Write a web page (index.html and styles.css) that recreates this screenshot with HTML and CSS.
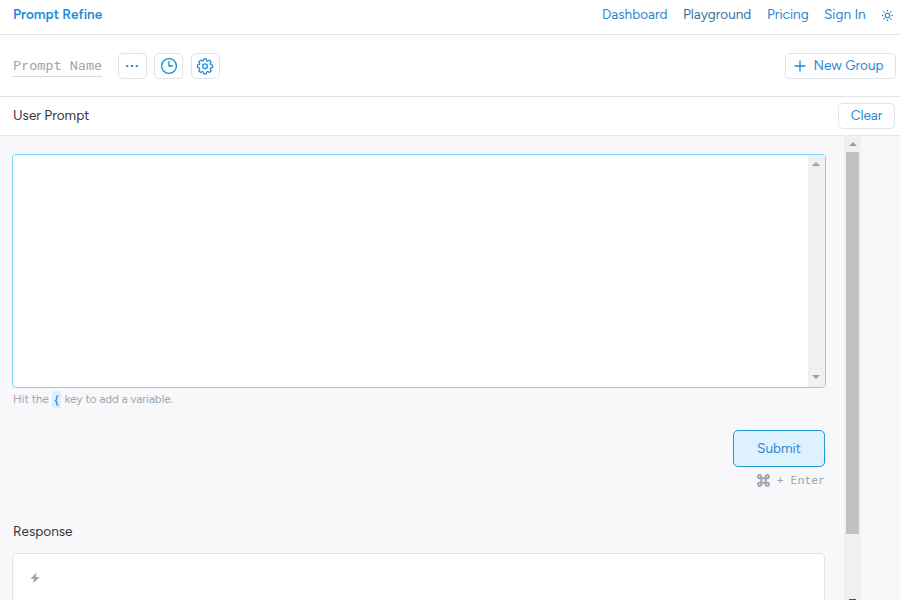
FILE: index.html
```html
<!DOCTYPE html>
<html lang="en">
<head>
    <meta charset="UTF-8">
    <meta name="viewport" content="width=device-width, initial-scale=1.0">
    <title>Prompt Refine</title>
    <link rel="stylesheet" href="styles.css">
</head>

<body>
<!-- Navigation -->
<header class="navbar">
    <a class="brand" href="#"><span>Prompt Refine</span></a>
    <nav class="nav-links">
        <a class="w-dashboard" href="#">Dashboard</a>
        <a class="w-playground active" href="#">Playground</a>
        <a class="w-pricing" href="#">Pricing</a>
        <a class="w-signin" href="#">Sign In</a>
        <svg class="sun" viewBox="0 0 24 24"><circle cx="12" cy="12" r="4.2"/><path d="M12 1.5v3M12 19.5v3M1.5 12h3M19.5 12h3M4.6 4.6l2.1 2.1M17.3 17.3l2.1 2.1M4.6 19.4l2.1-2.1M17.3 6.7l2.1-2.1"/></svg>
    </nav>
</header>

<!-- Prompt toolbar -->
<div class="toolbar">
    <div class="prompt-name">Prompt Name</div>
    <button class="btn icon-btn">
        <svg viewBox="0 0 18 18"><path class="dots" d="M3.2 8.1h2v2h-2zM8 8.1h2v2H8zM12.8 8.1h2v2h-2z"/></svg>
    </button>
    <button class="btn icon-btn">
        <svg viewBox="0 0 18 18"><circle cx="9" cy="9" r="7.4"/><path d="M9 4v5h4"/></svg>
    </button>
    <button class="btn icon-btn">
        <svg viewBox="0 0 24 24" class="gear"><path d="M10.3 2.4h3.4l.5 2.4 1.6.7 2.1-1.4 2.4 2.4-1.4 2.1.7 1.6 2.4.5v3.4l-2.4.5-.7 1.6 1.4 2.1-2.4 2.4-2.1-1.4-1.6.7-.5 2.4h-3.4l-.5-2.4-1.6-.7-2.1 1.4-2.4-2.4 1.4-2.1-.7-1.6-2.4-.5v-3.4l2.4-.5.7-1.6-1.4-2.1 2.4-2.4 2.1 1.4 1.6-.7z"/><circle cx="12" cy="12.4" r="3.2"/></svg>
    </button>
    <button class="btn new-group">
        <svg viewBox="0 0 12 12"><path d="M6 .5v11M.5 6h11"/></svg>
        <span>New Group</span>
    </button>
</div>

<div class="section-bar">
    <h2>User Prompt</h2>
    <button class="btn clear">Clear</button>
</div>

<main class="workspace">
    <div class="panel">
        <div class="editor">
            <div class="editor-text" contenteditable="true"></div>
            <div class="scrollbar editor-scroll">
                <span class="arrow up"></span>
                <span class="arrow down"></span>
            </div>
        </div>
        <div class="hint"><span>Hit the</span><code>{</code><span>key to add a variable.</span></div>

        <div class="submit-area">
            <button class="submit">Submit</button>
            <div class="shortcut">
                <svg viewBox="0 0 12 12"><path d="M4 4V2.6A1.5 1.5 0 1 0 2.6 4h6.8A1.5 1.5 0 1 0 8 2.6v6.8A1.5 1.5 0 1 0 9.4 8H2.6A1.5 1.5 0 1 0 4 9.4z"/></svg>
                <span>+ Enter</span>
            </div>
        </div>

        <h2 class="response-title">Response</h2>
        <div class="response">
            <svg viewBox="0 0 10 12"><path d="M6.6.5.4 6.8h3.7L3.2 11.5 9.6 5H5.8z"/></svg>
        </div>
    </div>
    <div class="scrollbar page-scroll">
        <span class="arrow up"></span>
        <div class="thumb"></div>
        <span class="arrow-end"></span>
    </div>
</main>

</body>
</html>
```

FILE: styles.css
```css
* {
    box-sizing: border-box;
}
body {
    margin: 0;
    height: 100vh;
    overflow: hidden;
    display: flex;
    flex-direction: column;
    font-family: Figtree, Inter, "Liberation Sans", sans-serif;
    font-size: 13.6px;
    line-height: 18px;
    color: #333338;
    background-color: #fff;
}
button {
    font: inherit;
    padding: 0;
}
a {
    color: #2f87cf;
    text-decoration: none;
}
h2 {
    margin: 0;
    font-size: 13.6px;
    font-weight: 400;
}
svg {
    display: block;
    flex: none;
    fill: none;
    stroke: #168bd2;
}
.navbar {
    height: 35px;
    flex: none;
    display: flex;
    justify-content: space-between;
    padding: 5px 6px 0 13px;
    border-bottom: 1px solid #e2e2ea;
}
.brand {
    font-weight: 600;
    color: #208ad6;
}
.nav-links {
    display: flex;
    gap: 16px;
}
.nav-links a {
    white-space: nowrap;
}
.nav-links .active {
    color: #3d72a4;
}
.w-dashboard {
    width: 65px;
}
.w-playground {
    width: 68px;
}
.w-pricing {
    width: 41px;
}
.w-signin {
    width: 42px;
}
.sun {
    width: 13px;
    height: 13px;
    margin: 4px 0 0 -1px;
    stroke-width: 2;
}
.toolbar {
    height: 62px;
    flex: none;
    display: flex;
    align-items: center;
    gap: 7.6px;
    padding: 0 4px 0 13px;
    border-bottom: 1px solid #e2e2ea;
}
.prompt-name {
    width: 89px;
    height: 20px;
    margin: 3px 8px 0 0;
    font-family: "Roboto Mono", "Liberation Mono", monospace;
    font-size: 13.5px;
    line-height: 17px;
    color: #a5a5aa;
    white-space: nowrap;
    border-bottom: 1px solid #d9d9e1;
}
.btn {
    display: flex;
    align-items: center;
    justify-content: center;
    color: #2f87cf;
    background-color: #fff;
    border: 1px solid #e2e2ea;
    border-radius: 5px;
}
.icon-btn {
    width: 29px;
    height: 26px;
}
.icon-btn svg {
    width: 18px;
    height: 18px;
    stroke-width: 1.3;
}
.icon-btn .gear {
    stroke-width: 1.6;
    stroke-linejoin: round;
}
.icon-btn .dots {
    fill: #168bd2;
    stroke: none;
}
.new-group {
    width: 111px;
    height: 26px;
    margin-left: auto;
    padding-right: 3px;
    gap: 7px;
}
.new-group svg {
    width: 12px;
    height: 12px;
    stroke-width: 1.3;
}
.new-group span {
    padding-bottom: 2px;
}
.section-bar {
    height: 38px;
    flex: none;
    display: flex;
    align-items: center;
    justify-content: space-between;
    padding: 0 5px 0 13px;
}
.section-bar h2 {
    padding-bottom: 2px;
}
.clear {
    width: 57px;
    height: 26px;
    padding-bottom: 2px;
}
.workspace {
    flex: 1;
    min-height: 0;
    display: flex;
    background-color: #f8f8fb;
    border-top: 1px solid #e7e7ec;
}
.panel {
    width: 844px;
    padding: 18px 18px 0 12px;
}
.editor {
    height: 234px;
    display: flex;
    background-color: #fff;
    border: 1px solid #7ccfff;
    border-radius: 4px;
    overflow: hidden;
}
.editor-text {
    flex: 1;
    outline: none;
    box-shadow: inset 0 2px 2px #f7f7f8;
}
.scrollbar {
    display: flex;
    flex-direction: column;
    align-items: center;
    background-color: #f0f0f0;
}
.arrow {
    border: 4px solid transparent;
}
.arrow.up {
    border-top: 0;
    border-bottom-color: #a0a0a0;
}
.arrow.down {
    border-bottom: 0;
    border-top-color: #a0a0a0;
}
.editor-scroll {
    width: 17px;
    justify-content: space-between;
    padding: 7px 1px 8px 0;
}
.hint {
    height: 17px;
    margin: 3px 0 0 1px;
    display: flex;
    font-size: 11.6px;
    line-height: 17px;
    color: #a5a5aa;
}
.hint code {
    width: 9px;
    margin: 0 4px 0 3px;
    text-align: center;
    font-family: "Roboto Mono", "Liberation Mono", monospace;
    font-weight: 700;
    color: #448fce;
    background-color: #daf0ff;
    border-radius: 2px;
}
.submit-area {
    margin: 22px 1px 0 0;
    display: flex;
    flex-direction: column;
    align-items: flex-end;
}
.submit {
    width: 92px;
    height: 37px;
    padding-bottom: 2px;
    color: #2f87cf;
    background-color: #def1ff;
    border: 1px solid #2497d8;
    border-radius: 5px;
}
.shortcut {
    height: 16px;
    margin-top: 5px;
    display: flex;
    align-items: center;
    gap: 7px;
    font-family: "Roboto Mono", "Liberation Mono", monospace;
    font-size: 11.5px;
    line-height: 16px;
    color: #a5a5aa;
}
.shortcut svg {
    width: 13px;
    height: 13px;
    stroke: #a2a2b3;
    stroke-width: 1.8;
}
.response-title {
    margin: 34px 0 0 1px;
}
.response {
    height: 47px;
    margin: 13px 1px 0 0;
    padding: 18px 17px 0;
    background-color: #fff;
    border: 1px solid #e2e2ea;
    border-bottom: none;
    border-radius: 5px 5px 0 0;
}
.response svg {
    width: 10px;
    height: 12px;
    fill: #a2a2b3;
    stroke: none;
}
.page-scroll {
    width: 17px;
    padding-top: 6px;
}
.thumb {
    width: 13px;
    height: 382px;
    margin-top: 6px;
    flex: none;
    background-color: #c1c1c1;
}
.arrow-end {
    width: 7px;
    height: 1px;
    margin-top: 65px;
    background-color: #505050;
}
```
